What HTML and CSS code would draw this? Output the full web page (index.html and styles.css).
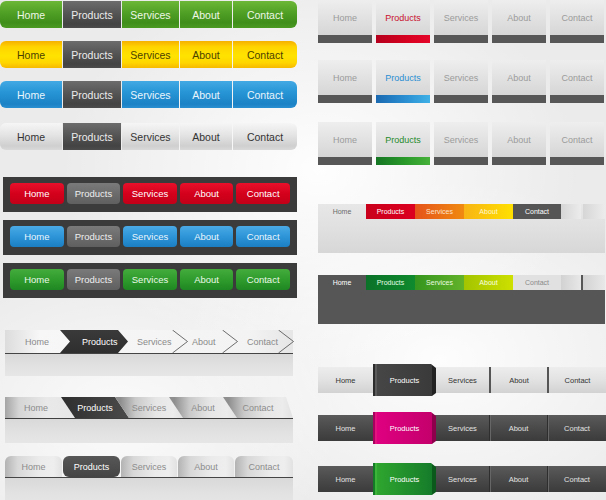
FILE: index.html
```html
<!DOCTYPE html>
<html>
<head>
<meta charset="utf-8">
<title>Navigation bars</title>
<link rel="stylesheet" href="styles.css">
</head>
<body>
<div class="page">
  <div class="col left">
    <nav class="pill green mt1">
      <span class="seg w1">Home</span><span class="seg w2 on">Products</span><span class="seg w3">Services</span><span class="seg w4">About</span><span class="seg w5">Contact</span>
    </nav>
    <nav class="pill yellow mt13">
      <span class="seg w1">Home</span><span class="seg w2 on">Products</span><span class="seg w3">Services</span><span class="seg w4">About</span><span class="seg w5">Contact</span>
    </nav>
    <nav class="pill blue mt13">
      <span class="seg w1">Home</span><span class="seg w2 on">Products</span><span class="seg w3">Services</span><span class="seg w4">About</span><span class="seg w5">Contact</span>
    </nav>
    <nav class="pill grey mt15">
      <span class="seg w1">Home</span><span class="seg w2 on">Products</span><span class="seg w3">Services</span><span class="seg w4">About</span><span class="seg w5">Contact</span>
    </nav>

    <nav class="dark red mt27">
      <span class="btn">Home</span><span class="btn on">Products</span><span class="btn">Services</span><span class="btn">About</span><span class="btn">Contact</span>
    </nav>
    <nav class="dark blue mt8">
      <span class="btn">Home</span><span class="btn on">Products</span><span class="btn">Services</span><span class="btn">About</span><span class="btn">Contact</span>
    </nav>
    <nav class="dark green mt8">
      <span class="btn">Home</span><span class="btn on">Products</span><span class="btn">Services</span><span class="btn">About</span><span class="btn">Contact</span>
    </nav>

    <nav class="crumb mt32">
      <div class="row">
        <span class="c-home">Home</span>
        <span class="c-prod">Products</span>
        <span class="c-item"><span class="c-txt">Services</span><svg class="chev" width="16" height="23" viewBox="0 0 16 23"><polyline points="0.5,0 15.5,11.5 0.5,23" fill="none" stroke="#4a4a4a" stroke-width="0.8"/></svg></span>
        <span class="c-item"><span class="c-txt">About</span><svg class="chev" width="16" height="23" viewBox="0 0 16 23"><polyline points="0.5,0 15.5,11.5 0.5,23" fill="none" stroke="#4a4a4a" stroke-width="0.8"/></svg></span>
        <span class="c-item"><span class="c-txt c-last">Contact</span><svg class="chev" width="16" height="23" viewBox="0 0 16 23"><polyline points="0.5,0 15.5,11.5 0.5,23" fill="none" stroke="#4a4a4a" stroke-width="0.8"/></svg></span>
      </div>
      <div class="panel"></div>
    </nav>

    <nav class="slant mt21">
      <div class="row">
        <span class="tab first">Home</span><span class="tab on">Products</span><span class="tab">Services</span><span class="tab">About</span><span class="tab last">Contact</span>
      </div>
      <div class="panel"></div>
    </nav>

    <nav class="round mt13">
      <div class="row">
        <span class="tab r1">Home</span><span class="tab r2 on">Products</span><span class="tab r3">Services</span><span class="tab r4">About</span><span class="tab r5">Contact</span>
      </div>
      <div class="panel"></div>
    </nav>
  </div>

  <div class="col right">
    <nav class="tabs red">
      <span class="t"><span class="face">Home</span><span class="bar"></span></span>
      <span class="t on"><span class="face">Products</span><span class="bar"></span></span>
      <span class="t"><span class="face">Services</span><span class="bar"></span></span>
      <span class="t"><span class="face">About</span><span class="bar"></span></span>
      <span class="t"><span class="face">Contact</span><span class="bar"></span></span>
    </nav>
    <nav class="tabs blue mt17">
      <span class="t"><span class="face">Home</span><span class="bar"></span></span>
      <span class="t on"><span class="face">Products</span><span class="bar"></span></span>
      <span class="t"><span class="face">Services</span><span class="bar"></span></span>
      <span class="t"><span class="face">About</span><span class="bar"></span></span>
      <span class="t"><span class="face">Contact</span><span class="bar"></span></span>
    </nav>
    <nav class="tabs green mt19">
      <span class="t"><span class="face">Home</span><span class="bar"></span></span>
      <span class="t on"><span class="face">Products</span><span class="bar"></span></span>
      <span class="t"><span class="face">Services</span><span class="bar"></span></span>
      <span class="t"><span class="face">About</span><span class="bar"></span></span>
      <span class="t"><span class="face">Contact</span><span class="bar"></span></span>
    </nav>

    <nav class="strip warm mt39">
      <div class="row">
        <span class="s s-home">Home</span><span class="s s-prod">Products</span><span class="s s-serv">Services</span><span class="s s-about">About</span><span class="s s-cont">Contact</span><span class="chip c1"></span><span class="chip c2"></span>
      </div>
      <div class="panel"></div>
    </nav>
    <nav class="strip cool mt22">
      <div class="row">
        <span class="s s-home">Home</span><span class="s s-prod">Products</span><span class="s s-serv">Services</span><span class="s s-about">About</span><span class="s s-cont">Contact</span><span class="chip c1"></span><span class="chip c2"></span>
      </div>
      <div class="panel"></div>
    </nav>

    <nav class="ribbon light mt43">
      <span class="r r1">Home</span><span class="r r2 on">Products</span><span class="r r3">Services</span><span class="r r4 div">About</span><span class="r r5 div">Contact</span>
    </nav>
    <nav class="ribbon darkr pink mt22">
      <span class="r r1">Home</span><span class="r r2 on">Products</span><span class="r r3">Services</span><span class="r r4 div">About</span><span class="r r5 div">Contact</span>
    </nav>
    <nav class="ribbon darkr emerald mt25">
      <span class="r r1">Home</span><span class="r r2 on">Products</span><span class="r r3">Services</span><span class="r r4 div">About</span><span class="r r5 div">Contact</span>
    </nav>
  </div>
</div>
</body>
</html>
```

FILE: styles.css
```css
* { box-sizing: border-box; margin: 0; padding: 0; }

html, body { width: 606px; height: 500px; overflow: hidden; }

body {
  font-family: "Liberation Sans", Arial, sans-serif;
  background:
    radial-gradient(ellipse 260px 200px at 320px 170px, rgba(255,255,255,0.95), rgba(255,255,255,0) 100%),
    radial-gradient(ellipse 260px 180px at 440px 360px, rgba(255,255,255,0.9), rgba(255,255,255,0) 100%),
    radial-gradient(ellipse 220px 160px at 120px 420px, rgba(255,255,255,0.8), rgba(255,255,255,0) 100%),
    #ebebeb;
}

.page {
  display: grid;
  grid-template-columns: 298px 288px;
  column-gap: 20px;
}

.col { display: flex; flex-direction: column; align-items: flex-start; }

.mt1 { margin-top: 1px; }
.mt8 { margin-top: 8px; }
.mt13 { margin-top: 13px; }
.mt15 { margin-top: 15px; }
.mt17 { margin-top: 17px; }
.mt19 { margin-top: 19px; }
.mt21 { margin-top: 21px; }
.mt22 { margin-top: 22px; }
.mt25 { margin-top: 25px; }
.mt27 { margin-top: 27px; }
.mt32 { margin-top: 32px; }
.mt39 { margin-top: 39px; }
.mt43 { margin-top: 43px; }

/* ---------- pill bars ---------- */
.pill { display: flex; gap: 1px; width: 297px; height: 27px; }
.pill .seg {
  display: flex; align-items: center; justify-content: center;
  font-size: 10.5px; height: 100%;
}
.pill .seg:first-child { border-radius: 6px 0 0 6px; }
.pill .seg:last-child { border-radius: 0 6px 6px 0; }
.w1 { width: 62px; } .w2 { width: 58px; } .w3 { width: 57px; } .w4 { width: 52px; } .w5 { width: 64px; }

.pill.green .seg { background: linear-gradient(#6cb737, #4f9f25 45%, #3f8e1b 80%, #4a9a22); color: #eef7e6; }
.pill.yellow .seg { background: linear-gradient(#f5b000, #ffd400 22%, #ffe300 55%, #ffd600 80%, #f6b900); color: #4b3f00; }
.pill.blue .seg { background: linear-gradient(#43a9e4, #2796d6 40%, #1b82c6 85%, #2a8fd0); color: #eaf5fc; }
.pill.grey .seg { background: linear-gradient(#f6f6f6, #e4e4e4 45%, #cfcfcf 85%, #d9d9d9); color: #333; }
.pill .seg.on { background: linear-gradient(#6c6c6c, #555 45%, #434343 85%, #4c4c4c); color: #ececec; }

/* ---------- dark bars ---------- */
.dark {
  display: flex; gap: 3px; width: 294px; height: 35px; margin-left: 3px;
  padding: 6px 7px 8px; background: #3b3b3b;
}
.dark .btn {
  flex: 1; border-radius: 4px;
  display: flex; align-items: center; justify-content: center;
  font-size: 9.5px; color: #fff;
}
.dark.red .btn { background: linear-gradient(#e8102a, #d3001b 55%, #c20018); }
.dark.blue .btn { background: linear-gradient(#4aaae6, #2b93d6 55%, #1c7ec2); color: #eaf6fd; }
.dark.green .btn { background: linear-gradient(#43ac3b, #2e9a2c 55%, #1f8722); color: #eaf8e8; }
.dark .btn.on { background: linear-gradient(#7a7a7a, #6b6b6b 55%, #5f5f5f); color: #eee; }

/* ---------- chevron crumb bar ---------- */
.crumb, .slant, .round { width: 288px; margin-left: 5px; }
.crumb .row {
  display: flex; height: 24px; border-bottom: 1px solid #444;
  background: linear-gradient(to right, #dcdcdc, #f7f7f7 12%, #f3f3f3 85%, #e6e6e6);
  font-size: 9px; color: #8a8a8a;
}
.crumb .row > span { display: flex; align-items: center; height: 23px; }
.c-home { width: 55px; padding-left: 20px; }
.c-prod {
  width: 68px; padding-left: 22px; color: #fff;
  background: linear-gradient(#3a3a3a, #2e2e2e);
  clip-path: polygon(0 0, 58px 0, 68px 50%, 58px 100%, 0 100%, 10px 50%);
}
.c-item { width: 55px; padding-left: 9px; }
.c-txt { flex: 1; }
.c-last { padding-left: 0; }
.chev { display: block; flex: none; }
.crumb .panel, .slant .panel, .round .panel {
  background: linear-gradient(#d9d9d9, #e2e2e2 60%, #e6e6e6);
}
.crumb .panel { height: 22px; }

/* ---------- slanted tabs ---------- */
.slant .row { display: flex; height: 22px; border-bottom: 1px solid #3f3f3f; }
.slant .tab {
  width: 68px; margin-left: -14px; height: 21px;
  display: flex; align-items: center; justify-content: center;
  font-size: 9px; color: #8c8c8c;
  clip-path: polygon(0 0, 54px 0, 100% 100%, 14px 100%);
  background: linear-gradient(to right, #8f8f8f 8%, #c9c9c9 30%, #e6e6e6 60%, #ececec 85%, #e2e2e2);
}
.slant .tab.first {
  width: 70px; margin-left: 0; padding-right: 8px;
  clip-path: polygon(0 0, 56px 0, 100% 100%, 0 100%);
  background: linear-gradient(to right, #a5a5a5, #d5d5d5 20%, #e9e9e9 60%, #e6e6e6);
}
.slant .tab.last { width: 70px; clip-path: polygon(0 0, 63px 0, 100% 100%, 14px 100%); }
.slant .tab.on { background: linear-gradient(to right, #2e2e2e, #3d3d3d 50%, #4a4a4a); color: #fff; }
.slant .panel { height: 24px; }

/* ---------- rounded tabs ---------- */
.round .row { display: flex; gap: 1px; height: 22px; border-bottom: 1px solid #454545; }
.round .tab {
  height: 21px; border-radius: 6px 6px 0 0;
  display: flex; align-items: center; justify-content: center;
  font-size: 9px; color: #8c8c8c;
  background: linear-gradient(to right, #b3b3b3, #d8d8d8 22%, #ebebeb 60%, #eeeeee 85%, #e2e2e2);
}
.round .tab.on { border-radius: 6px; background: linear-gradient(#575757, #454545); color: #fff; }
.r1 { width: 57px; } .r2 { width: 57px; } .r3 { width: 56px; } .r4 { width: 56px; } .r5 { width: 58px; }
.round .panel { height: 26px; }

/* ---------- right: tabs with bars ---------- */
.tabs { display: flex; gap: 4px; width: 286px; }
.tabs .t { width: 54px; display: flex; flex-direction: column; }
.tabs .face {
  height: 35px; display: flex; align-items: center; justify-content: center;
  font-size: 9px; color: #9b9b9b;
  background: linear-gradient(#eeeeee, #e2e2e2 50%, #d6d6d6);
}
.tabs .bar { height: 8px; background: #575757; }
.tabs.red .t.on .face { color: #c8102e; }
.tabs.red .t.on .bar { background: linear-gradient(to right, #b5001d, #d80020 60%, #e4072a); }
.tabs.blue .t.on .face { color: #2a8fd2; }
.tabs.blue .t.on .bar { background: linear-gradient(to right, #1a69b0, #2b8fd2 55%, #3fb0e6); }
.tabs.green .t.on .face { color: #268a2b; }
.tabs.green .t.on .bar { background: linear-gradient(to right, #167624, #2a9a2a 55%, #46b13a); }

/* ---------- right: colour strips ---------- */
.strip { width: 287px; }
.strip.warm { background: linear-gradient(#e7e7e7, #e0e0e0 50%, #d7d7d7); }
.strip.cool { background: #565656; }
.strip .row { display: flex; height: 15px; }
.strip .panel { height: 34px; }
.strip .s {
  display: flex; align-items: center; justify-content: center;
  font-size: 7px; color: #fff; width: 49px;
}
.strip .s-home, .strip .s-cont { width: 48px; }
.strip .chip.c1 { width: 20px; }
.strip .chip.c2 { width: 22px; margin-left: 2px; }

.warm .s-home { color: #6a6a6a; }
.warm .s-prod { background: linear-gradient(to right, #c9001b, #dc0020); }
.warm .s-serv { background: linear-gradient(to right, #e5531a, #f08a10); color: #fde3cc; }
.warm .s-about { background: linear-gradient(to right, #f8b414, #ffe000); color: #fff8d0; }
.warm .s-cont { background: #555; }
.warm .chip { background: linear-gradient(to right, #d6d6d6, #ececec); }

.cool .s-home { color: #fff; }
.cool .s-prod { background: linear-gradient(to right, #0a7228, #0f8a2e); color: #e6ffe6; }
.cool .s-serv { background: linear-gradient(to right, #35951e, #62b22a); color: #eafbe0; }
.cool .s-about { background: linear-gradient(to right, #a3c400, #cde000); color: #fbffe0; }
.cool .s-cont { background: #e1e1e1; color: #8a8a8a; }
.cool .chip { background: linear-gradient(to right, #d2d2d2, #e8e8e8); }

/* ---------- right: ribbon bars ---------- */
.ribbon { display: flex; width: 288px; height: 26px; }
.ribbon .r {
  display: flex; align-items: center; justify-content: center;
  font-size: 7.5px;
}
.ribbon .r1 { width: 55px; } .ribbon .r2 { width: 63px; } .ribbon .r3 { width: 53px; }
.ribbon .r4 { width: 58px; } .ribbon .r5 { width: 59px; }
.ribbon .r.on {
  margin: -3px 0;
  clip-path: polygon(0 0, calc(100% - 5px) 0, 100% 4px, 100% calc(100% - 3px), calc(100% - 4px) 100%, 0 100%);
}
.ribbon.light { background: linear-gradient(#ededed, #e2e2e2 50%, #d2d2d2); }
.ribbon.light .r { color: #333; }
.ribbon.light .r.div { border-left: 2px solid #555; }
.ribbon.light .r.on {
  color: #fff;
  background: linear-gradient(to right, #2c2c2c 0 2px, #5a5a5a 2px 4px, #464646 4px, #3a3a3a calc(100% - 4px), #222 calc(100% - 4px));
}
.ribbon.darkr { background: linear-gradient(#5a5a5a, #4a4a4a 50%, #3b3b3b); }
.ribbon.darkr .r { color: #e4e4e4; }
.ribbon.darkr .r.on { color: #fff; }
.ribbon.darkr .r.div { border-left: 1px solid #2e2e2e; box-shadow: inset 1px 0 0 #666; }
.ribbon.pink .r.on {
  background: linear-gradient(to right, #a8005e 0 2px, #e2137f 2px 4px, #df0080 4px, #c4006c calc(100% - 4px), #8c004c calc(100% - 4px));
}
.ribbon.emerald .r.on {
  background: linear-gradient(to right, #137a25 0 2px, #3cb43a 2px 4px, #2fa62f 4px, #157c2a calc(100% - 4px), #0b5a1c calc(100% - 4px));
}
```
